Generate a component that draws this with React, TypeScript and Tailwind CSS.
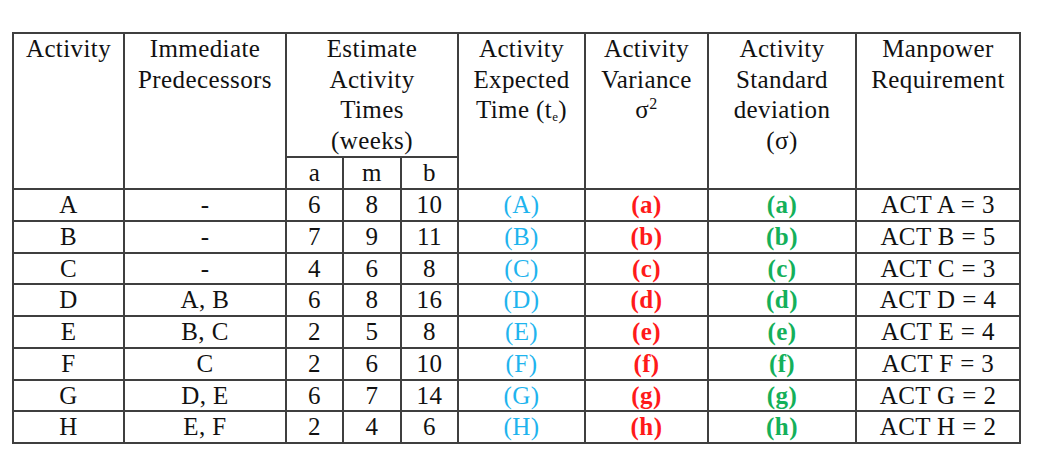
import React from "react";

const rows: [string, string, number, number, number, string, number][] = [
  ["A", "-", 6, 8, 10, "a", 3],
  ["B", "-", 7, 9, 11, "b", 5],
  ["C", "-", 4, 6, 8, "c", 3],
  ["D", "A, B", 6, 8, 16, "d", 4],
  ["E", "B, C", 2, 5, 8, "e", 4],
  ["F", "C", 2, 6, 10, "f", 3],
  ["G", "D, E", 6, 7, 14, "g", 2],
  ["H", "E, F", 2, 4, 6, "h", 2],
];

const th = "border-2 border-[#3f3f3f] p-0 align-top text-center font-normal leading-[30.5px]";
const sh = "border-2 border-[#3f3f3f] p-0 align-top text-center font-normal leading-[30px]";
const td = "border-2 border-[#3f3f3f] p-0 align-top text-center leading-[29.75px]";

export default function App() {
  return (
    <div className="w-[1042px] h-[466px] bg-white pl-[12px] pt-[32px] font-['Liberation_Serif','Times_New_Roman',serif] text-[#111]">
      <table className="border-collapse table-fixed text-[25px] tracking-[0.4px]">
        <colgroup>
          <col className="w-[111px]" />
          <col className="w-[162px]" />
          <col className="w-[57px]" />
          <col className="w-[58px]" />
          <col className="w-[57px]" />
          <col className="w-[127px]" />
          <col className="w-[123px]" />
          <col className="w-[148px]" />
          <col className="w-[164px]" />
        </colgroup>
        <thead>
          <tr>
            <th rowSpan={2} className={th}>Activity</th>
            <th rowSpan={2} className={th}>
              Immediate
              <br />
              Predecessors
            </th>
            <th colSpan={3} className={th}>
              Estimate
              <br />
              Activity
              <br />
              Times
              <br />
              (weeks)
            </th>
            <th rowSpan={2} className={th}>
              Activity
              <br />
              Expected
              <br />
              Time (t<span className="text-[13px] leading-none align-[-3px]">e</span>)
            </th>
            <th rowSpan={2} className={th}>
              Activity
              <br />
              Variance
              <br />
              σ<span className="text-[16px] leading-none align-super">2</span>
            </th>
            <th rowSpan={2} className={th}>
              Activity
              <br />
              Standard
              <br />
              deviation
              <br />
              (σ)
            </th>
            <th rowSpan={2} className={th}>
              Manpower
              <br />
              Requirement
            </th>
          </tr>
          <tr>
            <th className={sh}>a</th>
            <th className={sh}>m</th>
            <th className={sh}>b</th>
          </tr>
        </thead>
        <tbody>
          {rows.map(([act, pred, a, m, b, lower, mp]) => (
            <tr key={act}>
              <td className={td}>{act}</td>
              <td className={td}>{pred}</td>
              <td className={td}>{a}</td>
              <td className={td}>{m}</td>
              <td className={td}>{b}</td>
              <td className={`${td} text-[#1fb4ee]`}>({act})</td>
              <td className={`${td} text-[#ff1a1a] font-bold`}>({lower})</td>
              <td className={`${td} text-[#14b05a] font-bold`}>({lower})</td>
              <td className={td}>
                ACT {act} = {mp}
              </td>
            </tr>
          ))}
        </tbody>
      </table>
    </div>
  );
}
